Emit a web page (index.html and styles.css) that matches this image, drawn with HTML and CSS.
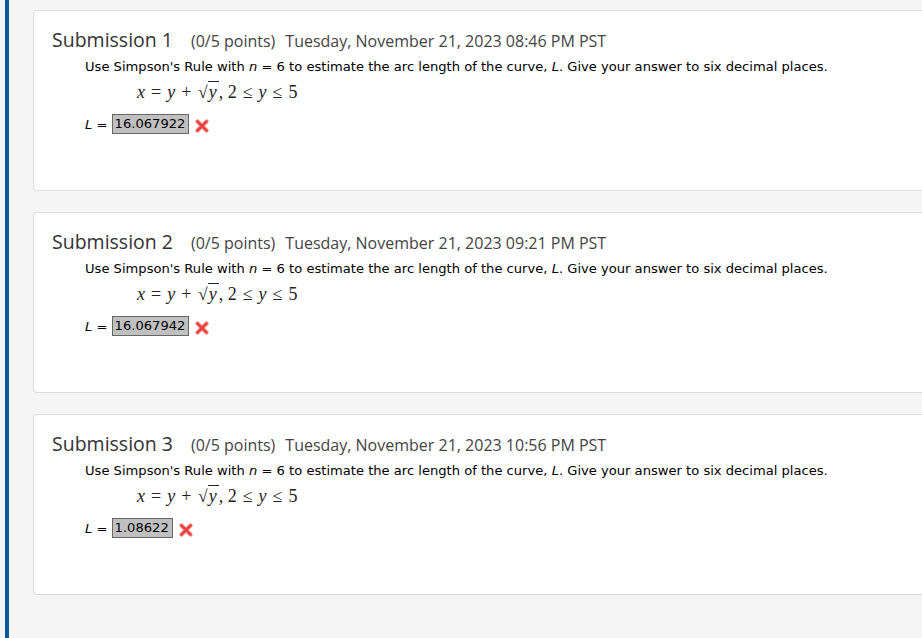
FILE: index.html
```html
<!DOCTYPE html>
<html>
<head>
<meta charset="utf-8">
<link rel="stylesheet" href="styles.css">
</head>
<body>
<div class="frame">
  <div class="list">
    <div class="card">
      <div class="head"><span class="title">Submission 1</span><span class="meta">(0/5 points)</span><span class="meta">Tuesday, November 21, 2023 08:46 PM PST</span></div>
      <div class="body">
        <p class="q">Use Simpson's Rule with <i>n</i> = 6 to estimate the arc length of the curve, <i>L</i>. Give your answer to six decimal places.</p>
        <div class="math"><span class="mi">x</span><span class="op">=</span><span class="mi">y</span><span class="op">+</span><span class="rad">√</span><span class="radicand"><span class="mi">y</span></span>, 2<span class="op">≤</span><span class="mi">y</span><span class="op">≤</span>5</div>
        <div class="ans"><i>L</i>&nbsp;=&nbsp;<span class="box">16.067922</span><svg class="x" viewBox="0 0 14 14" width="14" height="14"><path d="M2.5 2.5 L11.5 11.5 M11.5 2.5 L2.5 11.5" stroke="#f28a8a" stroke-width="4.2" stroke-linecap="round"/><path d="M2.5 2.5 L11.5 11.5 M11.5 2.5 L2.5 11.5" stroke="#e8403f" stroke-width="2.4" stroke-linecap="round"/></svg></div>
      </div>
    </div>
    <div class="card">
      <div class="head"><span class="title">Submission 2</span><span class="meta">(0/5 points)</span><span class="meta">Tuesday, November 21, 2023 09:21 PM PST</span></div>
      <div class="body">
        <p class="q">Use Simpson's Rule with <i>n</i> = 6 to estimate the arc length of the curve, <i>L</i>. Give your answer to six decimal places.</p>
        <div class="math"><span class="mi">x</span><span class="op">=</span><span class="mi">y</span><span class="op">+</span><span class="rad">√</span><span class="radicand"><span class="mi">y</span></span>, 2<span class="op">≤</span><span class="mi">y</span><span class="op">≤</span>5</div>
        <div class="ans"><i>L</i>&nbsp;=&nbsp;<span class="box">16.067942</span><svg class="x" viewBox="0 0 14 14" width="14" height="14"><path d="M2.5 2.5 L11.5 11.5 M11.5 2.5 L2.5 11.5" stroke="#f28a8a" stroke-width="4.2" stroke-linecap="round"/><path d="M2.5 2.5 L11.5 11.5 M11.5 2.5 L2.5 11.5" stroke="#e8403f" stroke-width="2.4" stroke-linecap="round"/></svg></div>
      </div>
    </div>
    <div class="card">
      <div class="head"><span class="title">Submission 3</span><span class="meta">(0/5 points)</span><span class="meta">Tuesday, November 21, 2023 10:56 PM PST</span></div>
      <div class="body">
        <p class="q">Use Simpson's Rule with <i>n</i> = 6 to estimate the arc length of the curve, <i>L</i>. Give your answer to six decimal places.</p>
        <div class="math"><span class="mi">x</span><span class="op">=</span><span class="mi">y</span><span class="op">+</span><span class="rad">√</span><span class="radicand"><span class="mi">y</span></span>, 2<span class="op">≤</span><span class="mi">y</span><span class="op">≤</span>5</div>
        <div class="ans"><i>L</i>&nbsp;=&nbsp;<span class="box">1.08622</span><svg class="x" viewBox="0 0 14 14" width="14" height="14"><path d="M2.5 2.5 L11.5 11.5 M11.5 2.5 L2.5 11.5" stroke="#f28a8a" stroke-width="4.2" stroke-linecap="round"/><path d="M2.5 2.5 L11.5 11.5 M11.5 2.5 L2.5 11.5" stroke="#e8403f" stroke-width="2.4" stroke-linecap="round"/></svg></div>
      </div>
    </div>
  </div>
</div>
</body>
</html>
```
FILE: styles.css
```css
html, body {
  margin: 0;
  padding: 0;
  background: #f5f5f5;
  height: 100%;
  overflow: hidden;
}
.frame {
  margin-left: 5px;
  border-left: 4px solid #005a9c;
  min-height: 638px;
  box-sizing: border-box;
  padding: 10px 0 0 24px;
}
.list {
  display: flex;
  flex-direction: column;
  gap: 21px;
}
.card {
  background: #fff;
  border: 1px solid #dddddd;
  border-right: none;
  border-radius: 4px 0 0 4px;
  height: 164px;
  padding: 15px 0 0 18px;
  margin-right: -10px;
}
.head {
  display: flex;
  align-items: baseline;
  font-family: "Open Sans", sans-serif;
  color: #444;
}
.title {
  font-size: 19.5px;
  color: #333;
  margin-right: 18px;
}
.meta {
  font-size: 16px;
  margin-right: 10px;
}
.body {
  padding-left: 33px;
  font-family: "DejaVu Sans", Verdana, sans-serif;
  font-size: 13.1px;
  color: #000;
}
.q {
  margin: 6px 0 0 0;
  line-height: 16px;
}
.math {
  font-family: "Liberation Serif", "Times New Roman", serif;
  font-size: 18px;
  margin: 6px 0 0 52px;
  color: #222;
  line-height: 22px;
}
.mi {
  font-style: italic;
}
.op {
  margin: 0 6px;
}
.rad {
  font-size: 17px;
  margin-left: 1px;
}
.radicand {
  border-top: 1px solid #222;
  padding: 0 2px 0 1px;
}
.ans {
  display: flex;
  align-items: center;
  margin-top: 10px;
  height: 20px;
}
.box {
  background: #c0c0c0;
  border: 1px solid #666;
  padding: 1px 3px 1px 2px;
  line-height: 16px;
}
.x {
  margin-left: 6px;
  margin-top: 4px;
}
```
